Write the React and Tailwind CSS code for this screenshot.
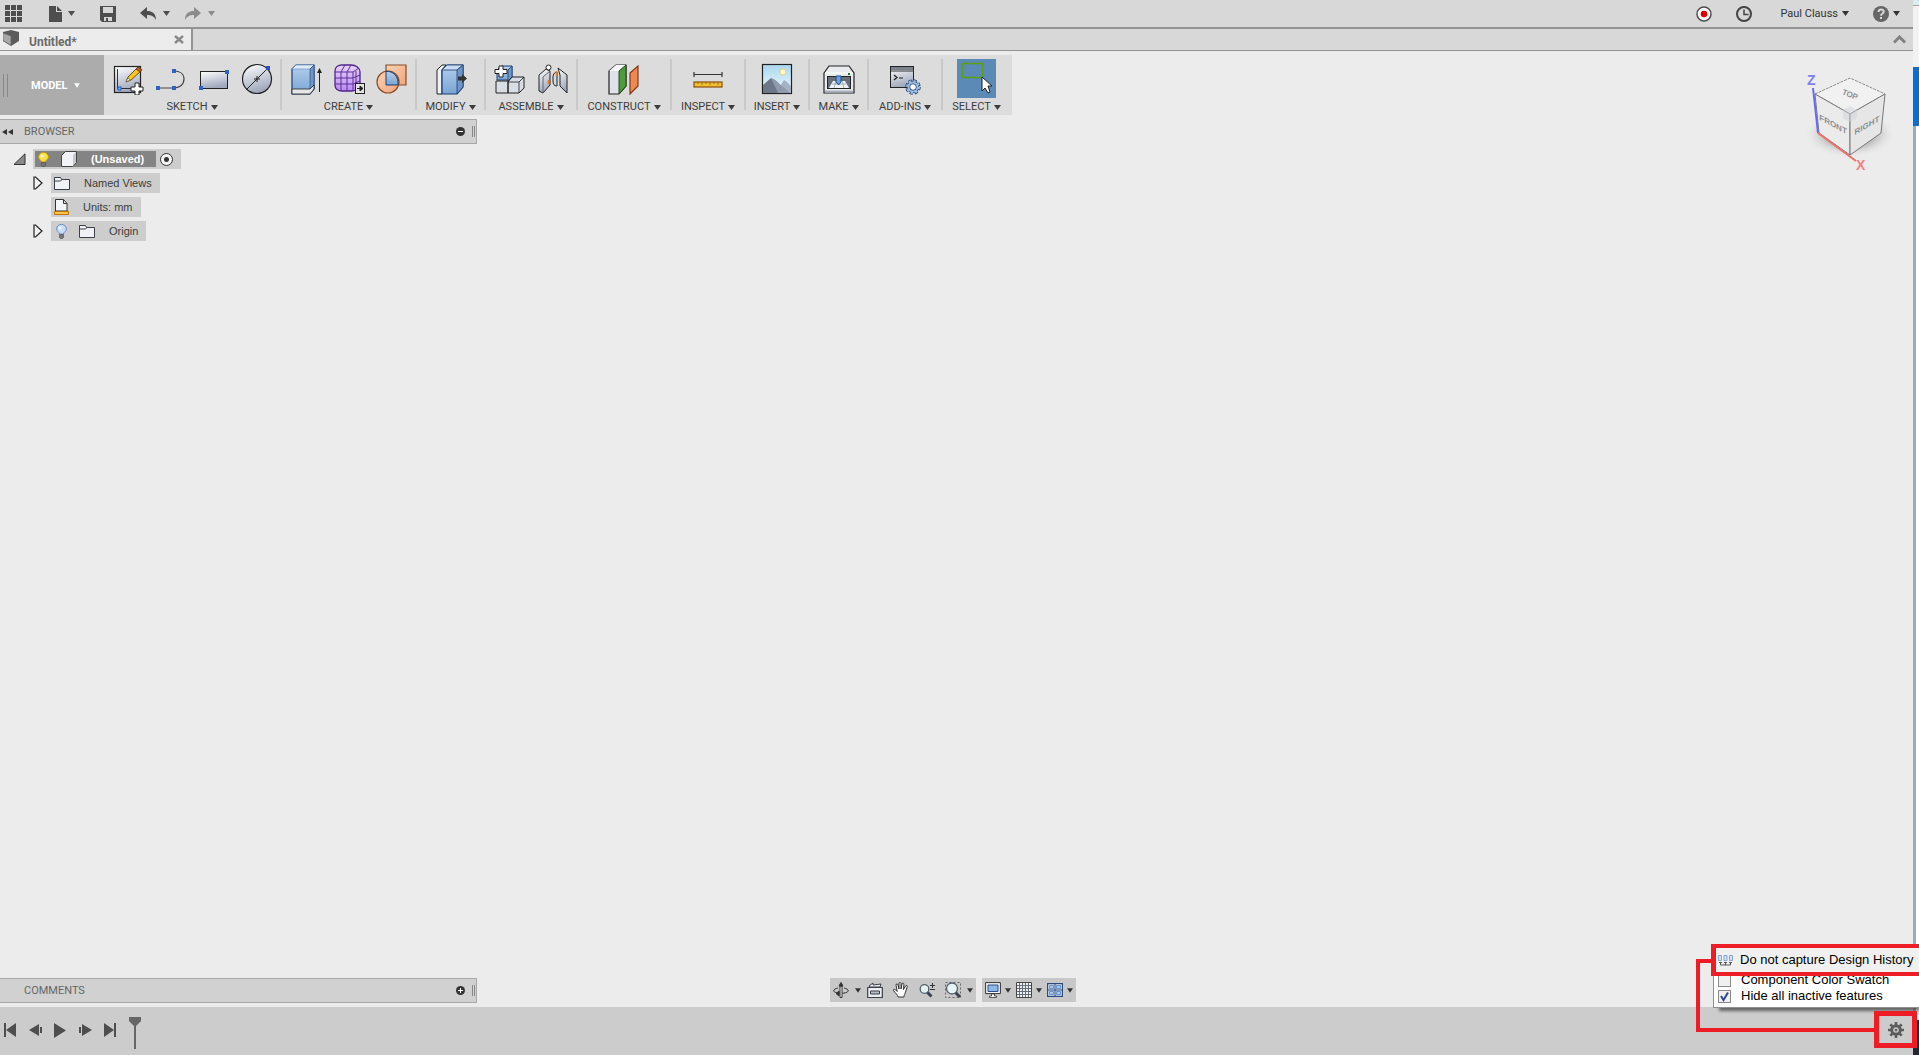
import React, { useState } from "react";

const Caret = ({ className = "" }) => (
    <svg className={`shrink-0 ${className}`} width="7" height="5" viewBox="0 0 7 5" fill="currentColor">
        <path d="M0 0h7L3.5 5z" />
    </svg>
);

/* ---------- Toolbar icons ---------- */

const Defs = () => (
    <svg width="0" height="0" className="absolute" aria-hidden="true">
        <defs>
            <linearGradient id="steel" x1="0" y1="0" x2="0.3" y2="1">
                <stop offset="0" stopColor="#ffffff" />
                <stop offset="1" stopColor="#a0a9bd" />
            </linearGradient>
            <linearGradient id="blue" x1="0" y1="0" x2="0" y2="1">
                <stop offset="0" stopColor="#b4cfec" />
                <stop offset="1" stopColor="#7ba4d4" />
            </linearGradient>
            <linearGradient id="orange" x1="0" y1="0" x2="1" y2="1">
                <stop offset="0" stopColor="#fbd3b8" />
                <stop offset="1" stopColor="#f0a57a" />
            </linearGradient>
            <linearGradient id="purple" x1="0" y1="0" x2="0" y2="1">
                <stop offset="0" stopColor="#e7d2fb" />
                <stop offset="1" stopColor="#b98af2" />
            </linearGradient>
            <linearGradient id="sky" x1="0" y1="0" x2="0" y2="1">
                <stop offset="0" stopColor="#a9d8f2" />
                <stop offset="1" stopColor="#f2f8fa" />
            </linearGradient>
            <radialGradient id="cubeShadow">
                <stop offset="0.4" stopColor="#9a9a9a" />
                <stop offset="1" stopColor="#ececec" stopOpacity="0" />
            </radialGradient>
        </defs>
    </svg>
);

const Icon = ({ children, w = 32, h = 32 }) => (
    <svg width={w} height={h} viewBox={`0 0 ${w} ${h}`} fill="none" className="shrink-0">
        {children}
    </svg>
);

const CreateSketchIcon = () => (
    <Icon>
        <rect x="2.500" y="3.500" width="26" height="26" fill="url(#steel)" stroke="#222" strokeWidth="1.200" />
        <path d="M5.500 6v19.500H22" stroke="#333" />
        <rect x="6" y="24" width="3" height="3" fill="#7ab4f0" stroke="#2458b8" />
        <path d="M14 19l2-5L26 4l4 3-11 10z" fill="#f6c81e" stroke="#6a4a10" />
        <path d="M26 4l4 3-2 2-4-3z" fill="#b5653c" stroke="#6a3a18" />
        <path d="M14 19l2-4 2 2z" fill="#fff" stroke="#555" strokeWidth=".6" />
        <path d="M23 20h4v4h4v4h-4v4h-4v-4h-4v-4h4z" fill="#fff" stroke="#222" />
    </Icon>
);

const LineIcon = () => (
    <Icon>
        <path d="M2 25h17c5 0 10-3 10-9 0-5-4-8-10-8" stroke="#444" strokeWidth="1.200" />
        <path d="M1 23h4v4H1zM17 23h4v4h-4zM17 6h4v4h-4z" fill="#2f62c8" />
    </Icon>
);

const RectIcon = () => (
    <Icon>
        <rect x="2.500" y="8.500" width="27" height="17" fill="url(#steel)" stroke="#222" />
        <path d="M1 23h4v4H1zM27 7h4v4h-4z" fill="#2f62c8" />
    </Icon>
);

const CircleIcon = () => (
    <Icon>
        <circle cx="16" cy="16" r="14.500" fill="url(#steel)" stroke="#222" strokeWidth="1.200" />
        <path d="M6 26L27 5M13 16h6M16 13v6" stroke="#222" />
        <path d="M25 3h4v4h-4z" fill="#2f4fc0" />
    </Icon>
);

const ExtrudeIcon = () => (
    <Icon>
        <path d="M2 6l4-4h18v24l-4 5H2z" fill="url(#blue)" stroke="#1d3f73" strokeWidth="1.200" />
        <path d="M2 6l4-4h18l-4 4z" fill="#deebf8" stroke="#5c87bd" strokeWidth=".6" />
        <path d="M20 6l4-4v24l-4 5z" fill="#6f96c6" stroke="#1d3f73" strokeWidth=".6" />
        <path d="M2 26h18l4-4v4l-4 5H2z" fill="#e4e6ea" stroke="#222" strokeWidth=".8" />
        <path d="M29.500 29V8" stroke="#222" />
        <path d="M27 10l2.500-5 2.500 5z" fill="#222" />
    </Icon>
);

const FormIcon = () => (
    <Icon>
        <path d="M2 8c0-4 3-6 7-6h9c5 0 9 3 9 7v12c0 4-4 7-8 7H9c-4 0-7-2-7-6z" fill="url(#purple)" stroke="#4e2485" strokeWidth="1.300" />
        <path d="M2 9h18l6-4M2 15h18l7-3M2 21h18l7-3M8 28V9l4-7M14 28V9l4-7M20 28V9M23 27V8" stroke="#5c2e95" strokeWidth="1" />
        <rect x="22.500" y="20.500" width="9" height="10" fill="#e4e4e4" stroke="#222" />
        <path d="M24 25.500h5M27 23l3 2.500-3 2.500z" stroke="#222" fill="#222" />
    </Icon>
);

const CombineIcon = () => (
    <Icon>
        <path d="M10 2h20v20H10z" fill="url(#orange)" stroke="#8c4a24" strokeWidth="1.200" />
        <circle cx="12" cy="19" r="11" fill="url(#orange)" stroke="#8c4a24" strokeWidth="1.200" />
        <path d="M10 8.500c7-1 13 5 12 13.500H10z" fill="url(#blue)" stroke="#1d3f73" />
    </Icon>
);

const PressPullIcon = () => (
    <Icon>
        <path d="M2 7l5-5h4L7 7v24H2z" fill="#eef1f5" stroke="#222" />
        <path d="M7 7l5-5h16v22l-6 7H7z" fill="url(#blue)" stroke="#1d3f73" strokeWidth="1.200" />
        <path d="M7 7l5-5h16l-6 5z" fill="#c9dcf1" stroke="#1d3f73" strokeWidth=".8" />
        <path d="M22 7l6-5v22l-6 7z" fill="#6f96c6" stroke="#1d3f73" strokeWidth=".8" />
        <path d="M23 13.500h4V11l5 4.500-5 4.500v-2.500h-4z" fill="#333" />
    </Icon>
);

const NewComponentIcon = () => (
    <Icon>
        <path d="M3 7l4-4h11v14H3z" fill="url(#blue)" stroke="#1d3f73" />
        <path d="M14 7l4-4v11l-4 4z" fill="#6f96c6" stroke="#1d3f73" strokeWidth=".8" />
        <path d="M2 18h12v12H2zM14 19l4-5h12v11l-5 5H14z" fill="#d9dde5" stroke="#222" />
        <path d="M14 19h11v11M25 19l5-5" stroke="#222" strokeWidth=".8" />
        <path d="M5 3h4v3.500h4v4H9V14H5v-3.500H1v-4h4z" fill="#fff" stroke="#222" />
    </Icon>
);

const JointIcon = () => (
    <Icon>
        <path d="M2 12l7-6 4 2v14l-7 8-4-2z" fill="url(#steel)" stroke="#222" />
        <path d="M6 14v16M6 14l7-6" stroke="#666" />
        <path d="M21 5l9 7v18l-7-7V12z" fill="url(#steel)" stroke="#222" />
        <circle cx="11.500" cy="4.500" r="2.500" fill="#fff" stroke="#222" />
        <path d="M16 14c0-3 2-5 4-5v14c-3 0-4-2-4-5z" fill="#d5d9e2" stroke="#222" />
        <path d="M11.500 17v4M19.500 8v5" stroke="#f07a1e" strokeWidth="1.500" />
    </Icon>
);

const PlaneIcon = () => (
    <Icon>
        <path d="M1 8l7-6h10v21l-7 8H1z" fill="#dfe2e8" stroke="#222" strokeWidth="1.200" />
        <path d="M1 8l7-6h10l-7 6z" fill="#f7f8fa" />
        <path d="M11 8l7-6v21l-7 8z" fill="#4f9a40" stroke="#1f4f18" />
        <path d="M22 10l8-7v20l-8 8z" fill="#ec8a55" stroke="#8c3410" strokeWidth="1.200" />
    </Icon>
);

const RulerIcon = () => (
    <Icon>
        <path d="M2 11.500h28M2 9v5M30 9v5" stroke="#333" strokeWidth="1.200" />
        <rect x="2" y="19" width="28" height="5" fill="#eec02e" stroke="#8c4f10" strokeWidth="1.200" />
        <path d="M6 19v2M10 19v3M14 19v2M18 19v3M22 19v2M26 19v3" stroke="#a86a18" />
    </Icon>
);

const ImageIcon = () => (
    <Icon>
        <rect x="1.500" y="1.500" width="29" height="29" fill="url(#sky)" stroke="#222" strokeWidth="1.200" />
        <circle cx="22" cy="9" r="3" fill="#fffbe0" stroke="#f0d060" />
        <path d="M15 30l8-13 3 2 4 4v7z" fill="#a3b3c3" />
        <path d="M2 30v-8l8-7 4 2 14 13z" fill="#6c7788" />
        <path d="M10 15l4 2 15 13H17z" fill="#8f9aac" />
    </Icon>
);

const PrinterIcon = () => (
    <Icon>
        <path d="M1 10l5-7h20l5 7v20H1z" fill="#e9ebef" stroke="#222" strokeWidth="1.200" />
        <path d="M2 10h28" stroke="#fff" />
        <rect x="4.500" y="13.500" width="23" height="12" fill="#6a7079" stroke="#222" />
        <path d="M6 25l4-7h12l4 7z" fill="#eef3fa" />
        <path d="M9 21h14M13 18l-2 7M19 18l2 7" stroke="#8a93a2" strokeWidth=".7" />
        <path d="M13 13h5v6l-2.500 3-2.500-3z" fill="#6c9fdc" stroke="#1d4f93" />
        <path d="M25 10h2v2h-2z" fill="#108018" />
        <path d="M2 28.500h28" stroke="#aab0bb" strokeWidth="2" />
    </Icon>
);

const ScriptIcon = () => (
    <Icon>
        <rect x="1.500" y="3.500" width="23" height="21" fill="url(#steel)" stroke="#222" />
        <path d="M2 4h22v3H2z" fill="#7c828c" />
        <path d="M2 8h23" stroke="#333" />
        <path d="M5 12l3 2.500L5 17M10 15h4" stroke="#222" strokeWidth="1.200" />
        <circle cx="24" cy="24" r="5.500" stroke="#1d3f73" strokeWidth="4.500" strokeDasharray="2.600 1.700" />
        <circle cx="24" cy="24" r="4.500" fill="#fff" stroke="#1d3f73" strokeWidth="3.500" />
        <circle cx="24" cy="24" r="4.500" stroke="#9dbce0" strokeWidth="2" />
        <circle cx="24" cy="24" r="5.500" stroke="#9dbce0" strokeWidth="3" strokeDasharray="2 2.300" />
    </Icon>
);

const SelectIcon = () => (
    <Icon w={39} h={39}>
        <rect x="5.500" y="4.500" width="20" height="14" stroke="#5aa010" strokeWidth="1.500" />
        <path d="M25 18v14l3-3 3 5 2-1-2-6h4z" fill="#fff" stroke="#222" />
    </Icon>
);

/* ---------- Layout pieces ---------- */

const ToolGroup = ({ label, width, children, last }) => (
    <div className={`flex flex-col items-center relative pt-1 pr-[2px] ${width}`}>
        <div className="h-[39px] shrink-0 flex items-center gap-[11px]">{children}</div>
        <button className="shrink-0 flex items-center gap-[3px] text-[11px] leading-[18px] text-[#3c3c3c]">
            {label}
            <Caret />
        </button>
        {!last && <span className="absolute right-0 top-1 h-[51px] w-[2px] bg-[#c9c9c9]" />}
    </div>
);

const Tool = ({ label, children, active }) => (
    <button aria-label={label} className={active ? "bg-[#5a8ab5]" : ""}>
        {children}
    </button>
);

const TopBar = () => (
    <header className="h-[29px] shrink-0 bg-[#d8d8d8] border-b-2 border-[#949494] flex items-center justify-between pl-[5px] pr-[13px] text-[#4e4e4e]">
        <div className="flex items-center">
            <button aria-label="Data panel">
                <svg width="17" height="17" viewBox="0 0 17 17" fill="currentColor">
                    <path d="M0 0h5v5H0zM6 0h5v5H6zM12 0h5v5h-5zM0 6h5v5H0zM6 6h5v5H6zM12 6h5v5h-5zM0 12h5v5H0zM6 12h5v5H6zM12 12h5v5h-5z" />
                </svg>
            </button>
            <button aria-label="File" className="flex items-center gap-[6px] ml-[27px]">
                <svg width="13" height="16" viewBox="0 0 13 16" fill="currentColor">
                    <path d="M0 0h7v6h6v10H0z" />
                    <path d="M8 0l5 5H8z" />
                </svg>
                <Caret />
            </button>
            <button aria-label="Save" className="ml-[25px]">
                <svg width="16" height="16" viewBox="0 0 16 16">
                    <path d="M0 0h16v16H2l-2-2z" fill="#4e4e4e" />
                    <path d="M3 1h10v6H3zM4 11h8v4H4z" fill="#d8d8d8" />
                    <path d="M6 12h2v3H6z" fill="#4e4e4e" />
                </svg>
            </button>
            <button aria-label="Undo" className="flex items-center gap-[7px] ml-6">
                <svg width="16" height="13" viewBox="0 0 16 13" fill="currentColor">
                    <path d="M7 0v4c5 0 9 2 9 9-2-4-5-5-9-5v4L0 6z" />
                </svg>
                <Caret />
            </button>
            <button aria-label="Redo" className="flex items-center gap-[7px] ml-[15px] text-[#8c8c8c]">
                <svg width="16" height="13" viewBox="0 0 16 13" fill="currentColor">
                    <path d="M9 0v4c-5 0-9 2-9 9 2-4 5-5 9-5v4l7-6z" />
                </svg>
                <Caret />
            </button>
        </div>
        <div className="flex items-center">
            <button aria-label="Record">
                <svg width="16" height="16" viewBox="0 0 16 16">
                    <circle cx="8" cy="8" r="7" fill="#fff" stroke="#4e4e4e" strokeWidth="1.500" />
                    <circle cx="8" cy="8" r="3.300" fill="#e00000" />
                </svg>
            </button>
            <button aria-label="Job status" className="ml-6">
                <svg width="16" height="16" viewBox="0 0 16 16" fill="none" stroke="#444" strokeWidth="2">
                    <circle cx="8" cy="8" r="7" />
                    <path d="M8 3.500V8.500h4.500" strokeWidth="1.500" />
                </svg>
            </button>
            <button className="flex items-center gap-1 ml-[28px] text-[11px] text-[#333]">
                <span className="pt-[2px]">Paul Clauss</span>
                <Caret />
            </button>
            <button aria-label="Help" className="flex items-center gap-1 ml-6">
                <svg width="16" height="16" viewBox="0 0 16 16" fill="none">
                    <circle cx="8" cy="8" r="8" fill="#666" />
                    <path d="M5.500 6c0-3.500 5.300-3.200 5.300-.4C10.800 7.500 8 7.500 8 9.700M8 11v2" stroke="#d8d8d8" strokeWidth="2" />
                </svg>
                <Caret className="text-[#333]" />
            </button>
        </div>
    </header>
);

const TabRow = () => (
    <div className="h-[22px] shrink-0 bg-[#d8d8d8] border-b border-[#949494] flex items-center justify-between">
        <div className="w-[193px] h-full bg-[#ececec] border-r-2 border-[#949494] flex items-center pl-[3px] pr-[7px]">
            <svg width="16" height="16" viewBox="0 0 16 16" className="-mt-1">
                <path d="M0 2l8-2 8 2v9l-8 5-8-5z" fill="#5c5c5c" />
                <path d="M0 3l8 3v9.500l-8-5z" fill="#a9a9a9" stroke="#666" strokeWidth=".7" />
            </svg>
            <span className="ml-[10px] mt-1 text-xs leading-4 font-bold text-[#6a6a6a]">Untitled*</span>
            <button aria-label="Close tab" className="ml-auto">
                <svg width="10" height="9" viewBox="0 0 10 9" stroke="#8a8a8a" strokeWidth="2.500">
                    <path d="M1 1l8 7M9 1L1 8" />
                </svg>
            </button>
        </div>
        <button aria-label="Collapse toolbar" className="mr-[7px]">
            <svg width="13" height="9" viewBox="0 0 13 9" fill="none" stroke="#808080" strokeWidth="3">
                <path d="M1 7.500L6.500 2 12 7.500" />
            </svg>
        </button>
    </div>
);

const Toolbar = () => (
    <nav className="mt-1 h-[60px] flex self-start bg-[#dcdcdc]">
        <button className="w-[104px] bg-[#acacac] flex items-center pl-[3px] text-[11px] font-bold text-white">
            <span className="h-[23px] w-[5px] border-x border-[#888]" />
            <span className="ml-[23px] mr-[6px] pt-[2px]">MODEL</span>
            <Caret className="w-[6px]" />
        </button>
        <ToolGroup label="SKETCH" width="w-[178px]">
            <Tool label="Create Sketch"><CreateSketchIcon /></Tool>
            <Tool label="Line"><LineIcon /></Tool>
            <Tool label="Rectangle"><RectIcon /></Tool>
            <Tool label="Circle"><CircleIcon /></Tool>
        </ToolGroup>
        <ToolGroup label="CREATE" width="w-[135px]">
            <Tool label="Extrude"><ExtrudeIcon /></Tool>
            <Tool label="Create Form"><FormIcon /></Tool>
            <Tool label="Combine"><CombineIcon /></Tool>
        </ToolGroup>
        <ToolGroup label="MODIFY" width="w-[69px]">
            <Tool label="Press Pull"><PressPullIcon /></Tool>
        </ToolGroup>
        <ToolGroup label="ASSEMBLE" width="w-[92px]">
            <Tool label="New Component"><NewComponentIcon /></Tool>
            <Tool label="Joint"><JointIcon /></Tool>
        </ToolGroup>
        <ToolGroup label="CONSTRUCT" width="w-[94px]">
            <Tool label="Offset Plane"><PlaneIcon /></Tool>
        </ToolGroup>
        <ToolGroup label="INSPECT" width="w-[74px]">
            <Tool label="Measure"><RulerIcon /></Tool>
        </ToolGroup>
        <ToolGroup label="INSERT" width="w-[64px]">
            <Tool label="Attached Canvas"><ImageIcon /></Tool>
        </ToolGroup>
        <ToolGroup label="MAKE" width="w-[59px]">
            <Tool label="3D Print"><PrinterIcon /></Tool>
        </ToolGroup>
        <ToolGroup label="ADD-INS" width="w-[74px]">
            <Tool label="Scripts and Add-Ins"><ScriptIcon /></Tool>
        </ToolGroup>
        <ToolGroup label="SELECT" width="w-[69px]" last>
            <Tool label="Select" active><SelectIcon /></Tool>
        </ToolGroup>
    </nav>
);

const PanelHeader = ({ title, collapsible, sign }) => (
    <div className="w-[477px] h-[25px] bg-[#d1d1d1] border-y border-r border-[#a8a8a8] flex items-center pr-px text-[11px] text-[#666]">
        <span className="w-6 pl-[2px]">
            {collapsible && (
                <svg width="11" height="6" viewBox="0 0 11 6" fill="#333">
                    <path d="M5 0v6L0 3zM11 0v6L6 3z" />
                </svg>
            )}
        </span>
        <span className="pt-[2px]">{title}</span>
        <button aria-label={`Toggle ${title}`} className="ml-auto">
            <svg width="9" height="9" viewBox="0 0 9 9">
                <circle cx="4.500" cy="4.500" r="4.500" fill="#333" />
                <path d={sign === "plus" ? "M2 4.500h5M4.500 2v5" : "M2 4.500h5"} stroke="#fff" />
            </svg>
        </button>
        <span className="ml-[7px] w-[3px] h-[11px] border-x border-[#888]" />
    </div>
);

const FolderIcon = () => (
    <svg width="16" height="14" viewBox="0 0 16 14" fill="#f1f2f5" stroke="#3a3f4a">
        <path d="M.5 13.500v-12h6l1 2h8v10z" />
        <path d="M.5 5h6l1.500-1.500" fill="none" />
    </svg>
);

const BulbIcon = ({ color, stroke }) => (
    <svg width="11" height="15" viewBox="0 0 11 15">
        <path d="M3.500 10C3.500 8 .6 7.500.6 4.900a4.900 4.500 0 019.800 0C10.400 7.500 7.500 8 7.500 10z" fill={color} stroke={stroke} />
        <circle cx="4" cy="4" r="1.500" fill="#fff" opacity=".8" />
        <path d="M3.500 10.500h4v3l-1 1h-2l-1-1z" fill="#777" stroke="#444" strokeWidth=".6" />
    </svg>
);

const BodyIcon = () => (
    <svg width="16" height="16" viewBox="0 0 16 16" fill="#f2f3f6" stroke="#444">
        <path d="M.5 4.500l4-4h11v11l-4 4H.5z" />
        <path d="M12 4l3-3v10l-3 4z" fill="#c3c7d0" stroke="none" />
    </svg>
);

const Expander = () => (
    <button aria-label="Expand" className="w-[18px] h-5 flex items-center">
        <svg width="10" height="14" viewBox="0 0 10 14" fill="#f4f4f4" stroke="#222" strokeWidth="1.200">
            <path d="M1 1v12h1.500L9 7 2.500 1z" />
        </svg>
    </button>
);

const BrowserTree = () => (
    <ul className="mt-[5px] flex flex-col items-start gap-1 font-['Liberation_Sans',Arial,sans-serif] text-[11px] leading-5 text-[#3c3c3c]">
        <li className="flex items-center pl-[13px]">
            <button aria-label="Collapse" className="w-5">
                <svg width="13" height="12" viewBox="0 0 13 12">
                    <path d="M12 .8v10.700H1z" fill="#8a8a8a" stroke="#333" />
                </svg>
            </button>
            <div className="h-5 w-[148px] bg-[#cdcdcd] flex items-center pl-[2px]">
                <div className="h-4 w-[121px] bg-[#848484] flex items-center pl-[3px]">
                    <BulbIcon color="#ffe04a" stroke="#c89a10" />
                    <span className="ml-3"><BodyIcon /></span>
                    <span className="ml-[14px] font-bold text-white">(Unsaved)</span>
                </div>
                <input type="radio" name="active" aria-label="Activate component" defaultChecked className="appearance-none ml-1 size-[13px] rounded-full border border-[#333] bg-[radial-gradient(circle,#333_2px,#f4f4f4_3px)]" />
            </div>
        </li>
        <li className="flex items-center pl-[33px]">
            <Expander />
            <div className="h-5 flex items-center pl-[3px] pr-2 bg-[#cdcdcd]">
                <FolderIcon />
                <span className="ml-[14px]">Named Views</span>
            </div>
        </li>
        <li className="flex items-center pl-[51px]">
            <div className="h-5 flex items-center pl-[3px] pr-2 bg-[#cdcdcd]">
                <svg width="15" height="16" viewBox="0 0 15 16">
                    <path d="M1.500 12V.5h8l3.500 4V12z" fill="#f4f5f8" stroke="#333" />
                    <path d="M9.500.5v4H13" fill="none" stroke="#333" />
                    <path d="M.5 12.500h14v3H.5z" fill="#ffc83c" stroke="#b87408" />
                </svg>
                <span className="ml-[14px]">Units: mm</span>
            </div>
        </li>
        <li className="flex items-center pl-[33px]">
            <Expander />
            <div className="h-5 flex items-center pl-[5px] pr-2 bg-[#cdcdcd]">
                <BulbIcon color="#c8dcfc" stroke="#6c8cc4" />
                <span className="ml-3"><FolderIcon /></span>
                <span className="ml-[14px]">Origin</span>
            </div>
        </li>
    </ul>
);

const ViewCube = () => (
    <svg width="109" height="110" viewBox="-6 0 109 110" fontFamily="Liberation Sans, Arial, sans-serif" fontWeight="bold">
        <ellipse cx="40" cy="68" rx="46" ry="24" fill="url(#cubeShadow)" />
        <path d="M5 28L40 12l35 16-35 20z" fill="#f1f1f1" stroke="#8c8c8c" strokeDasharray="3 1" />
        <path d="M5 28l35 20v41L9 67z" fill="#ebebeb" stroke="#777" />
        <path d="M75 28L40 48v41l31-22z" fill="#e6e6e6" stroke="#777" />
        <path d="M33 44l7-4 7 4v8l-7 4-7-4z" fill="#cfd2da" opacity=".5" />
        <g fill="#8a8f98" fontSize="8" textAnchor="middle">
            <text transform="translate(39 31) rotate(22)">TOP</text>
            <text transform="translate(23 61) skewY(28)">FRONT</text>
            <text transform="translate(57 62) skewY(-30)">RIGHT</text>
        </g>
        <path d="M3 22l5 45" stroke="#6a6af0" strokeWidth="2" />
        <path d="M8 67l38 28" stroke="#f07070" strokeWidth="2" />
        <text x="-3" y="19" fontSize="14" fill="#8080f5">Z</text>
        <text x="46" y="104" fontSize="14" fill="#f58080">X</text>
    </svg>
);

const NavBar = () => (
    <div className="flex gap-[6px] text-[#333]">
        <div className="h-6 flex items-center pl-[3px] pr-[3px] bg-[#c8c8c8]">
            <button aria-label="Orbit" className="flex items-center gap-[6px]">
                <svg width="16" height="16" viewBox="0 0 16 16" fill="none" stroke="#333">
                    <path d="M5 6C2.500 6.500.8 7.500.8 8.700c0 1.500 3 2.600 7.200 2.600s7.200-1.100 7.200-2.600C15.200 7.500 13.500 6.500 11 6" />
                    <path d="M7 15.500V4h2v11.500z" fill="#fff" />
                    <path d="M8 .5L6 4h4z" fill="#333" />
                    <path d="M6 9l-3 2.500 3 2.500z" fill="#333" />
                </svg>
                <Caret className="w-[6px]" />
            </button>
            <button aria-label="Look At" className="ml-[6px]">
                <svg width="16" height="16" viewBox="0 0 16 16" fill="#eceef2" stroke="#3a3f4a">
                    <path d="M2 4l4-3v2l8-1-1 3H3z" />
                    <path d="M.7 5.500h14.600v10H.7z" strokeWidth="1.200" />
                    <path d="M3.500 9h9v3h-9z" fill="#b8bcc6" />
                </svg>
            </button>
            <button aria-label="Pan" className="ml-[10px]">
                <svg width="16" height="16" viewBox="0 0 16 16" fill="#fff" stroke="#333">
                    <path d="M5 15c0-2-3-4-4.500-6.500C0 7 2 7 2.700 8l1.500 1.500L3 3c0-1.500 1.700-1.500 2 0l1 4V1.500C6 .2 8 .2 8 1.500V7l1-5c.3-1.400 2-1 1.900.3L10.500 7.500 12.500 4c.7-1.200 2.200-.4 1.700.8L12.500 10c-.5 2-1.500 3-1.500 5z" />
                </svg>
            </button>
            <button aria-label="Zoom" className="ml-[10px]">
                <svg width="16" height="16" viewBox="0 0 16 16" fill="none" stroke="#333">
                    <path d="M8 10l4.500 4.500" stroke="#3a4050" strokeWidth="3" />
                    <circle cx="5.500" cy="7" r="4.300" fill="#e6f4f6" stroke="#555f6c" strokeWidth="1.300" />
                    <path d="M13.500 1v5M11 3.500h5M11 7.500h5" />
                </svg>
            </button>
            <button aria-label="Zoom Window" className="flex items-center gap-[6px] ml-[10px]">
                <svg width="16" height="16" viewBox="0 0 16 16" fill="none">
                    <path d="M.5.5h15v15H.5z" stroke="#666" strokeDasharray="2 2" />
                    <path d="M10 10l5 5" stroke="#3a4050" strokeWidth="3" />
                    <circle cx="7" cy="6.500" r="5.500" fill="#e6f4f6" stroke="#555f6c" strokeWidth="1.300" />
                </svg>
                <Caret className="w-[6px]" />
            </button>
        </div>
        <div className="h-6 flex items-center gap-[5px] pl-[3px] pr-[3px] bg-[#c8c8c8]">
            <button aria-label="Display Settings" className="flex items-center gap-1">
                <svg width="16" height="16" viewBox="0 0 16 16">
                    <path d="M.6.6h14.800v11H.6z" fill="#f4f4f4" stroke="#333" />
                    <path d="M3 3h10v6.500H3z" fill="#8fb8e4" stroke="#2a4f88" />
                    <path d="M6.500 12h3v2h2v1.500h-7V14h2z" fill="#fff" stroke="#333" strokeWidth=".8" />
                </svg>
                <Caret className="w-[6px]" />
            </button>
            <button aria-label="Grid and Snaps" className="flex items-center gap-1">
                <svg width="16" height="16" viewBox="0 0 16 16" fill="none">
                    <path d="M.5.5h15v15H.5z" fill="#f2f3f5" stroke="#444" />
                    <path d="M3.500 1v14M6.500 1v14M9.500 1v14M12.500 1v14M1 3.500h14M1 6.500h14M1 9.500h14M1 12.500h14" stroke="#666c78" />
                </svg>
                <Caret className="w-[6px]" />
            </button>
            <button aria-label="Viewports" className="flex items-center gap-1">
                <svg width="16" height="14" viewBox="0 0 16 14">
                    <path d="M.6.600h14.800v12.800H.6z" fill="#dce8f6" stroke="#2a4a80" strokeWidth="1.200" />
                    <path d="M2.500 2.500h4v3h-4zM9.500 2.500h4v3h-4zM2.500 8.500h4v3h-4zM9.500 8.500h4v3h-4z" fill="#a9c6ea" stroke="#6a92c8" />
                    <path d="M8 1v12M1 7h14" stroke="#2a4a80" />
                </svg>
                <Caret className="w-[6px]" />
            </button>
        </div>
    </div>
);

const playback = [
    { label: "Go to start", d: "M0 0h2v14H0zM12 0v14L2 7z" },
    { label: "Step back", d: "M10 1v12L0 7zM11 4h2v6h-2z" },
    { label: "Play", d: "M0 0v15l12-7.500z" },
    { label: "Step forward", d: "M0 4h2v6H0zM3 1v12l10-6z" },
    { label: "Go to end", d: "M0 0v14l10-7zM10 0h2v14h-2z" },
];

const Timeline = () => (
    <footer className="h-12 shrink-0 mt-1 bg-[#cccccc] flex items-start">
        <div className="h-[46px] flex items-center gap-3 pl-1 text-[#4e4e4e]">
            {playback.map((p) => (
                <button key={p.label} aria-label={p.label}>
                    <svg width="13" height="15" viewBox="0 0 13 15" fill="currentColor">
                        <path d={p.d} />
                    </svg>
                </button>
            ))}
            <svg width="12" height="32" viewBox="0 0 12 32" fill="#666" className="mt-[6px]">
                <path d="M0 0h12v4L7 9v23H5V9L0 4z" />
            </svg>
        </div>
        <button aria-label="Timeline settings" className="relative z-10 ml-auto -mr-1 mt-1 w-[43px] h-[37px] border-[5px] border-[#ee1c24] flex items-center justify-center">
            <svg width="16" height="16" viewBox="0 0 16 16" fill="none" stroke="#5c5c5c">
                <circle cx="8" cy="8" r="4.300" strokeWidth="3" />
                <path d="M8 0v3M8 13v3M0 8h3M13 8h3M2.300 2.300l2 2M11.700 11.700l2 2M2.300 13.700l2-2M11.700 4.300l2-2" strokeWidth="2.600" />
                <circle cx="8" cy="8" r="1" fill="#5c5c5c" />
            </svg>
        </button>
    </footer>
);

const MenuCheck = ({ label, checked, onChange }) => (
    <label className="h-4 flex items-center gap-[10px] relative">
        <input type="checkbox" checked={checked} onChange={onChange} className="appearance-none size-[13px] border border-[#8a8a8a] bg-[#f0f0f0]" />
        {checked && (
            <svg width="13" height="13" viewBox="0 0 13 13" fill="none" className="absolute left-0">
                <path d="M3 6l2.500 4L10 2.500" stroke="#33478f" strokeWidth="2" />
            </svg>
        )}
        {label}
    </label>
);

const SettingsMenu = () => {
    const [swatch, setSwatch] = useState(false);
    const [hideInactive, setHideInactive] = useState(true);

    return (
        <>
            {/* callout line from the gear to the menu */}
            <div className="absolute right-[43px] bottom-[23px] w-[180px] h-[73px] border-4 border-r-0 border-[#ee1c24]" />
            <div className="absolute right-0 bottom-[47px] w-[208px] font-['Liberation_Sans',Arial,sans-serif] text-[13px] text-black whitespace-nowrap">
                <button className="relative z-10 w-full h-8 flex items-center gap-[7px] pl-[2px] border-y-4 border-l-[5px] border-[#ee1c24] bg-[#f0f0f0]">
                    <svg width="15" height="11" viewBox="0 0 15 11" fill="#d6e2f5" stroke="#8aa4d0">
                        <path d="M.5.5h3v5h-3zM6 .5h3v5H6zM11.500.5h3v5h-3z" />
                        <path d="M1 7.500h3M6 7.500h3M11 7.500h3M2.500 8v2h10V8M7.500 8v2" fill="none" stroke="#555" />
                    </svg>
                    Do not capture Design History
                </button>
                <div className="-mt-1 ml-[2px] pl-1 pb-[3px] bg-white border-l border-b border-[#909090] shadow-[6px_3px_3px_rgba(0,0,0,0.5)]">
                    <MenuCheck label="Component Color Swatch" checked={swatch} onChange={() => setSwatch(!swatch)} />
                    <MenuCheck label="Hide all inactive features" checked={hideInactive} onChange={() => setHideInactive(!hideInactive)} />
                </div>
            </div>
        </>
    );
};

/* Sliver of the window behind the app */
const BackWindow = () => (
    <div className="w-[6px] shrink-0 flex flex-col">
        <div className="h-[5px] bg-[#d3f1f5]" />
        <div className="h-[62px] bg-[#f2f2f2] border-t border-[#a8a8a8]" />
        <div className="h-[59px] bg-[#0470d6]" />
        <div className="flex-1 bg-white border-l-[3px] border-[#a0abb5]" />
        <div className="h-[35px] bg-[#222833]" />
    </div>
);

const App = () => {
    return (
        <div className="relative h-screen flex overflow-hidden bg-[#ececec] font-[Roboto,sans-serif]">
            <Defs />
            <div className="flex-1 min-w-0 flex flex-col">
                <TopBar />
                <TabRow />
                <Toolbar />
                <main className="relative flex-1 flex flex-col pt-1">
                    <PanelHeader title="BROWSER" collapsible sign="minus" />
                    <BrowserTree />
                    <div className="mt-auto grid grid-cols-[1fr_auto_1fr] pr-2">
                        <PanelHeader title="COMMENTS" sign="plus" />
                        <NavBar />
                    </div>
                    <div className="absolute right-0 -top-[49px]">
                        <ViewCube />
                    </div>
                </main>
                <Timeline />
            </div>
            <BackWindow />
            <SettingsMenu />
        </div>
    );
};

export default App;
